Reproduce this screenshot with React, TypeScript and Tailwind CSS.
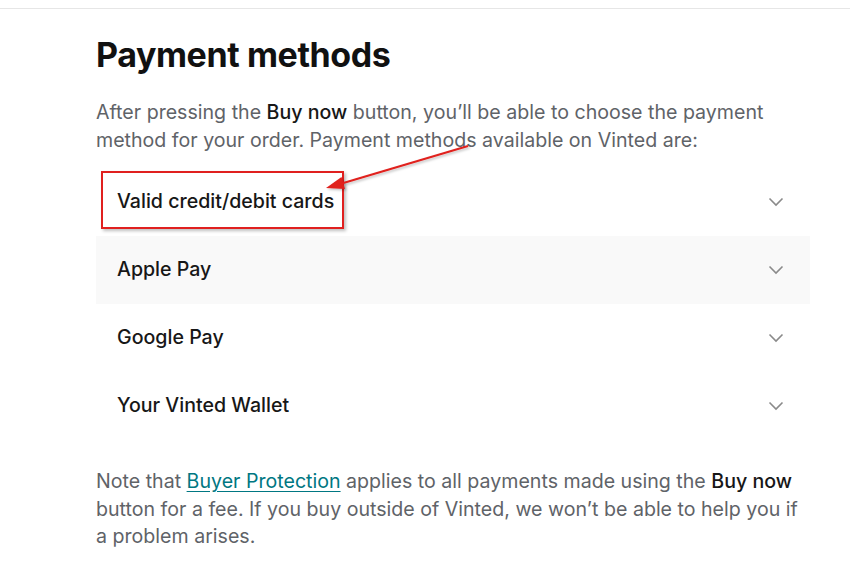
import React from "react";

const items = ["Valid credit/debit cards", "Apple Pay", "Google Pay", "Your Vinted Wallet"];

function Chevron() {
  return (
    <svg width="16" height="10" viewBox="0 0 16 10" fill="none">
      <path d="M1.5 1.5 L8 8 L14.5 1.5" stroke="#8a8a8a" strokeWidth="1.6" />
    </svg>
  );
}

export default function App() {
  return (
    <div className="relative w-[850px] h-[567px] overflow-hidden bg-white" style={{ fontFamily: "Inter, 'Noto Sans', sans-serif" }}>
      <div className="h-[9px] border-b border-[#e6e6e6]" />
      <div className="ml-[96px] w-[714px] pt-[26px]">
        <h1 className="text-[34px] leading-[40px] font-bold tracking-[-0.012em] text-[#111111]">Payment methods</h1>
        <p className="mt-[23px] text-[19.6px] leading-[28px] text-[#5f6368]">
          After pressing the <span className="text-[#171717] font-medium">Buy now</span> button, you’ll be able to choose the payment method for your order. Payment methods available on Vinted are:
        </p>
        <div className="mt-[14px] flex flex-col">
          {items.map((t, i) => (
            <div
              key={t}
              className={`h-[68px] flex items-center justify-between pl-[21px] pr-[26px] ${i === 1 ? "bg-[#f9f9f9]" : ""}`}
            >
              <span className="text-[19.6px] font-medium text-[#171717]">{t}</span>
              <Chevron />
            </div>
          ))}
        </div>
        <p className="mt-[28px] text-[19.6px] leading-[27.5px] text-[#5f6368]">
          Note that <span className="text-[#007782] underline underline-offset-[3px]">Buyer Protection</span> applies to all payments made using the <span className="text-[#171717] font-medium">Buy now</span> button for a fee. If you buy outside of Vinted, we won’t be able to help you if a problem arises.
        </p>
      </div>
      <div className="absolute left-[101px] top-[171px] w-[243px] h-[58px] border-2 border-[#e0201f] shadow-[2px_2px_3px_rgba(0,0,0,0.25)]" />
      <svg className="absolute left-0 top-0" width="850" height="567" style={{ pointerEvents: "none" }}>
        <defs>
          <filter id="sh" x="-10%" y="-10%" width="130%" height="140%">
            <feDropShadow dx="1.5" dy="1.5" stdDeviation="1" floodColor="#000" floodOpacity="0.25" />
          </filter>
        </defs>
        <g filter="url(#sh)">
          <line x1="468" y1="146" x2="340" y2="184" stroke="#e0201f" strokeWidth="2.2" />
          <polygon points="326,188 345,189 341.5,177" fill="#e0201f" />
        </g>
      </svg>
    </div>
  );
}
